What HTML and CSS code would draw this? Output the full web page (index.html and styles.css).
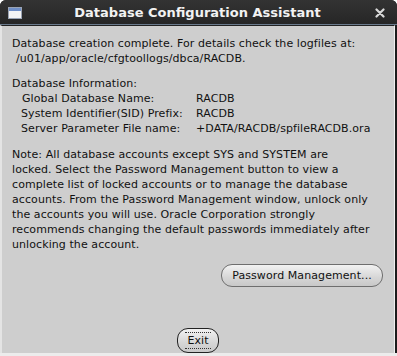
FILE: index.html
```html
<!DOCTYPE html>
<html>
<head>
<meta charset="utf-8">
<link rel="stylesheet" href="styles.css">
</head>
<body>
<div class="window">
  <div class="titlebar">
    <svg class="app-icon" width="14" height="12" viewBox="0 0 14 12">
      <rect x="0.5" y="0.5" width="13" height="11" fill="#f4f4f4" stroke="#9aa4b4"/>
      <rect x="1" y="1" width="12" height="3" fill="#6f8fc8"/>
    </svg>
    <div class="title">Database Configuration Assistant</div>
    <svg class="close" width="10" height="10" viewBox="0 0 10 10">
      <path d="M1.5 1.5 L8.5 8.5 M8.5 1.5 L1.5 8.5" stroke="#d8d8d8" stroke-width="2.2" stroke-linecap="round"/>
    </svg>
  </div>
  <div class="content">
    <p class="para">Database creation complete. For details check the logfiles at:<br><span class="path">/u01/app/oracle/cfgtoollogs/dbca/RACDB.</span></p>
    <div class="info">
      <div class="info-head">Database Information:</div>
      <div class="info-grid">
        <span class="lbl">Global Database Name:</span><span>RACDB</span>
        <span class="lbl lbl2">System Identifier(SID) Prefix:</span><span>RACDB</span>
        <span class="lbl lbl2">Server Parameter File name:</span><span>+DATA/RACDB/spfileRACDB.ora</span>
      </div>
    </div>
    <p class="para note">Note: All database accounts except SYS and SYSTEM are<br>locked. Select the Password Management button to view a<br>complete list of locked accounts or to manage the database<br>accounts. From the Password Management window, unlock only<br>the accounts you will use. Oracle Corporation strongly<br>recommends changing the default passwords immediately after<br>unlocking the account.</p>
    <div class="pw-row"><button class="btn pw">Password Management...</button></div>
    <div class="exit-row"><button class="btn exit"><span class="focus">Exit</span></button></div>
  </div>
  <div class="bottom"></div>
</div>
</body>
</html>
```
FILE: styles.css
```css
html, body { margin: 0; padding: 0; background: #ffffff; }
.window {
  width: 397px; height: 356px; display: flex; flex-direction: column;
  background: #1c1c1c; border-radius: 6px 6px 0 0; overflow: hidden;
  font-family: "DejaVu Sans", sans-serif;
}
.titlebar {
  height: 24px; flex: none; display: flex; align-items: center;
  background: linear-gradient(#333333, #262626);
  border-bottom: 1px solid #6a7a8c; padding: 0 12px 0 8px;
}
.app-icon { flex: none; margin-top: 2px; }
.title {
  flex: 1; text-align: center; color: #f2f2f2; font-weight: bold;
  font-size: 13px; padding-right: 2px;
}
.close { flex: none; margin-top: 1px; }
.content {
  flex: 1; display: flex; flex-direction: column;
  background: #cecece; border-left: 2px solid #e4e4e4;
  border-right: 1px solid #f0f0f0; margin-right: 2px;
  padding: 10px 0 0 10px; color: #111; font-size: 11px; line-height: 15px;
  letter-spacing: 0.08px;
  border-top: 1px solid #222;
}
.para { margin: 0; white-space: nowrap; }
.path { padding-left: 4px; }
.info { margin-top: 10px; }
.info-grid {
  display: grid; grid-template-columns: 174px auto; padding-left: 10px;
}
.lbl2 { margin-left: -1px; }
.note { margin-top: 11px; }
.pw-row { display: flex; justify-content: flex-end; padding-right: 11px; margin-top: 12px; }
.btn {
  font-family: "DejaVu Sans", sans-serif; font-size: 11px; color: #111;
  letter-spacing: 0.08px;
  border: 1px solid #6e6e6e; border-radius: 11px;
  background: linear-gradient(#f2f2f2, #d6d6d6 60%, #c8c8c8);
  padding: 0; margin: 0;
}
.pw { width: 162px; height: 23px; }
.exit-row { display: flex; justify-content: center; margin-top: auto; padding-right: 10px; margin-bottom: 0; }
.exit { width: 42px; height: 25px; border-color: #222; border-width: 1.5px; }
.focus { border-top: 1px dotted #333; border-bottom: 1px dotted #333; padding: 1px 2px; }
.bottom { height: 3px; flex: none; background: #ececec; }
```
